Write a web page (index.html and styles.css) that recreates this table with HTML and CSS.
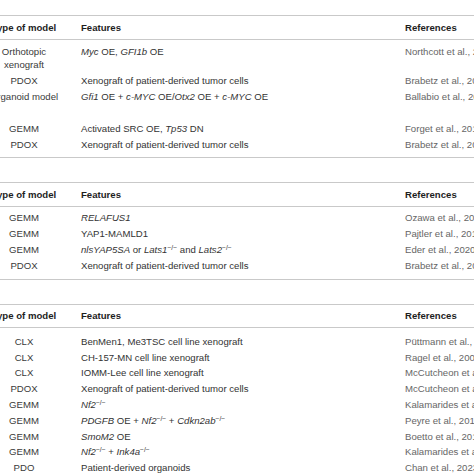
FILE: index.html
```html
<!DOCTYPE html>
<html lang="en">
<head>
<meta charset="utf-8">
<title>Models table</title>
<link rel="stylesheet" href="styles.css">
</head>
<body>
<div class="page">
  <section class="tbl t1">
    <div class="row head"><div class="c1">Type of model</div><div class="c2">Features</div><div class="c3">References</div></div>
    <div class="body">
      <div class="row"><div class="c1">Orthotopic<br>xenograft</div><div class="c2"><i>Myc</i> OE, <i>GFI1b</i> OE</div><div class="c3">Northcott et al., 2012</div></div>
      <div class="row"><div class="c1">PDOX</div><div class="c2">Xenograft of patient-derived tumor cells</div><div class="c3">Brabetz et al., 2018</div></div>
      <div class="row"><div class="c1">Organoid model</div><div class="c2"><i>Gfi1</i> OE + <i>c-MYC</i> OE/<i>Otx2</i> OE + <i>c-MYC</i> OE</div><div class="c3">Ballabio et al., 2020</div></div>
      <div class="row"><div class="c1"></div><div class="c2"></div><div class="c3"></div></div>
      <div class="row"><div class="c1">GEMM</div><div class="c2">Activated SRC OE, <i>Tp53</i> DN</div><div class="c3">Forget et al., 2018</div></div>
      <div class="row"><div class="c1">PDOX</div><div class="c2">Xenograft of patient-derived tumor cells</div><div class="c3">Brabetz et al., 2018</div></div>
    </div>
  </section>

  <section class="tbl t2">
    <div class="row head"><div class="c1">Type of model</div><div class="c2">Features</div><div class="c3">References</div></div>
    <div class="body">
      <div class="row"><div class="c1">GEMM</div><div class="c2"><i>RELAFUS1</i></div><div class="c3">Ozawa et al., 2018</div></div>
      <div class="row"><div class="c1">GEMM</div><div class="c2">YAP1-MAMLD1</div><div class="c3">Pajtler et al., 2019</div></div>
      <div class="row"><div class="c1">GEMM</div><div class="c2"><i>nlsYAP5SA</i> or <i>Lats1</i><sup>−/−</sup> and <i>Lats2</i><sup>−/−</sup></div><div class="c3">Eder et al., 2020</div></div>
      <div class="row"><div class="c1">PDOX</div><div class="c2">Xenograft of patient-derived tumor cells</div><div class="c3">Brabetz et al., 2018</div></div>
    </div>
  </section>

  <section class="tbl t3">
    <div class="row head"><div class="c1">Type of model</div><div class="c2">Features</div><div class="c3">References</div></div>
    <div class="body">
      <div class="row"><div class="c1">CLX</div><div class="c2">BenMen1, Me3TSC cell line xenograft</div><div class="c3">Püttmann et al., 2005</div></div>
      <div class="row"><div class="c1">CLX</div><div class="c2">CH-157-MN cell line xenograft</div><div class="c3">Ragel et al., 2008</div></div>
      <div class="row"><div class="c1">CLX</div><div class="c2">IOMM-Lee cell line xenograft</div><div class="c3">McCutcheon et al., 2000</div></div>
      <div class="row"><div class="c1">PDOX</div><div class="c2">Xenograft of patient-derived tumor cells</div><div class="c3">McCutcheon et al., 2000</div></div>
      <div class="row"><div class="c1">GEMM</div><div class="c2"><i>Nf2</i><sup>−/−</sup></div><div class="c3">Kalamarides et al., 2002</div></div>
      <div class="row"><div class="c1">GEMM</div><div class="c2"><i>PDGFB</i> OE + <i>Nf2</i><sup>−/−</sup> + <i>Cdkn2ab</i><sup>−/−</sup></div><div class="c3">Peyre et al., 2015</div></div>
      <div class="row"><div class="c1">GEMM</div><div class="c2"><i>SmoM2</i> OE</div><div class="c3">Boetto et al., 2018</div></div>
      <div class="row"><div class="c1">GEMM</div><div class="c2"><i>Nf2</i><sup>−/−</sup> + <i>Ink4a</i><sup>−/−</sup></div><div class="c3">Kalamarides et al., 2011</div></div>
      <div class="row"><div class="c1">PDO</div><div class="c2">Patient-derived organoids</div><div class="c3">Chan et al., 2023</div></div>
    </div>
  </section>
</div>
</body>
</html>
```

FILE: styles.css
```css
html, body {
  margin: 0;
  padding: 0;
  background: #ffffff;
}
body {
  width: 474px;
  height: 474px;
  overflow: hidden;
  font-family: "Liberation Sans", Arial, sans-serif;
  font-size: 9.6px;
  color: #333333;
}
.page {
  width: 620px;
  margin-left: -30px;
  padding-top: 15px;
}
.tbl {
  border-top: 1px solid #c9c9c9;
  border-bottom: 1px solid #c9c9c9;
  margin-bottom: 24px;
}
.row {
  display: grid;
  grid-template-columns: 108px 324px 1fr;
  align-items: start;
  line-height: 13.4px;
  padding: 1.3px 0;
  white-space: nowrap;
}
.row.head {
  height: 24px;
  padding: 0;
  align-items: center;
  box-sizing: border-box;
  border-bottom: 1px solid #c9c9c9;
  font-weight: bold;
  color: #1e1e1e;
}
.c1 {
  text-align: center;
  color: #3a3a3a;
}
.c2 {
  padding-left: 3px;
}
.c3 {
  padding-left: 3px;
  color: #666666;
}
.head .c1, .head .c2, .head .c3 {
  color: #1e1e1e;
}
.body .row {
  min-height: 16px;
  box-sizing: border-box;
}
.t1 .body {
  padding: 3.3px 0 4.3px;
}
.t2 .body {
  padding: 3px 0 4.6px;
}
.t3 .row.head {
  height: 23.5px;
}
.t3 .body {
  padding: 5.6px 0 4px;
}
.t3 .body .row {
  min-height: 15.8px;
  padding: 1.2px 0;
}
sup {
  font-size: 70%;
  line-height: 0;
  vertical-align: 0.45em;
}
i {
  font-style: italic;
}
```
